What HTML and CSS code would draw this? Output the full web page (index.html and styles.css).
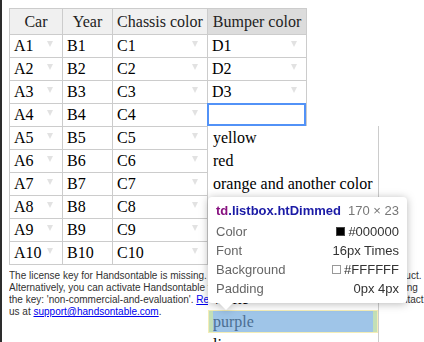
FILE: index.html
```html
<!DOCTYPE html>
<html>
<head>
<meta charset="utf-8">
<link rel="stylesheet" href="styles.css">
</head>
<body>
<div class="hot">
  <table class="grid">
    <colgroup><col class="c1"><col class="c2"><col class="c3"><col class="c4"></colgroup>
    <thead>
      <tr><th>Car</th><th>Year</th><th>Chassis color</th><th class="hl">Bumper color</th></tr>
    </thead>
    <tbody>
      <tr><td><span class="arrow"></span>A1</td><td>B1</td><td><span class="arrow"></span>C1</td><td><span class="arrow"></span>D1</td></tr>
      <tr><td><span class="arrow"></span>A2</td><td>B2</td><td><span class="arrow"></span>C2</td><td><span class="arrow"></span>D2</td></tr>
      <tr><td><span class="arrow"></span>A3</td><td>B3</td><td><span class="arrow"></span>C3</td><td><span class="arrow"></span>D3</td></tr>
      <tr><td><span class="arrow"></span>A4</td><td>B4</td><td><span class="arrow"></span>C4</td><td class="edit"></td></tr>
      <tr><td><span class="arrow"></span>A5</td><td>B5</td><td><span class="arrow"></span>C5</td><td><span class="arrow"></span>D5</td></tr>
      <tr><td><span class="arrow"></span>A6</td><td>B6</td><td><span class="arrow"></span>C6</td><td><span class="arrow"></span>D6</td></tr>
      <tr><td><span class="arrow"></span>A7</td><td>B7</td><td><span class="arrow"></span>C7</td><td><span class="arrow"></span>D7</td></tr>
      <tr><td><span class="arrow"></span>A8</td><td>B8</td><td><span class="arrow"></span>C8</td><td><span class="arrow"></span>D8</td></tr>
      <tr><td><span class="arrow"></span>A9</td><td>B9</td><td><span class="arrow"></span>C9</td><td><span class="arrow"></span>D9</td></tr>
      <tr><td><span class="arrow"></span>A10</td><td>B10</td><td><span class="arrow"></span>C10</td><td><span class="arrow"></span>D10</td></tr>
    </tbody>
  </table>
  <div class="license">The license key for Handsontable is missing. Use your purchased key to activate the product.<br>Alternatively, you can activate Handsontable to use for non-commercial purposes by passing<br>the key: 'non-commercial-and-evaluation'. <a href="#">Read more about it in the documentation</a> or contact<br>us at <a href="#">support@handsontable.com</a>.</div>

  <div class="list">
    <div class="item">yellow</div>
    <div class="item">red</div>
    <div class="item">orange and another color</div>
    <div class="item">green</div>
    <div class="item">blue</div>
    <div class="item">gray</div>
    <div class="item">black</div>
    <div class="item">white</div>
    <div class="item hl"><span class="hl-content">purple</span></div>
    <div class="item">lime</div>
  </div>

  <div class="tip">
    <div class="tip-head"><span class="title"><span class="tag">td</span><span class="cls">.listbox.htDimmed</span></span><span class="dim">170 × 23</span></div>
    <div class="tip-row"><span class="lbl">Color</span><span class="val"><i class="sw sw-black"></i>#000000</span></div>
    <div class="tip-row"><span class="lbl">Font</span><span class="val">16px Times</span></div>
    <div class="tip-row"><span class="lbl">Background</span><span class="val"><i class="sw sw-white"></i>#FFFFFF</span></div>
    <div class="tip-row"><span class="lbl">Padding</span><span class="val">0px 4px</span></div>
  </div>
</div>
</body>
</html>
```
FILE: styles.css
```css
html {
  height: 100%;
  border-left: 2px solid #2d2d2d;
  overflow: hidden;
  background: #fff;
}
body {
  margin: 8px 0 0 7px;
  font-family: "Liberation Serif", "Times New Roman", serif;
  font-size: 16px;
}
.hot {
  position: relative;
  height: 334px;
  overflow: hidden;
}
.grid {
  border-collapse: separate;
  border-spacing: 0;
  table-layout: fixed;
  width: 298px;
}
.c1 { width: 54px; }
.c2 { width: 50px; }
.c3 { width: 95px; }
.c4 { width: 99px; }
.grid th,
.grid td {
  border-right: 1px solid #ccc;
  border-bottom: 1px solid #ccc;
  white-space: nowrap;
  font-weight: normal;
  color: #000;
}
.grid th {
  background: #f0f0f0;
  border-top: 1px solid #ccc;
  line-height: 25px;
  padding: 0;
  text-align: center;
  color: #222;
}
.grid th.hl {
  background: #dcdcdc;
}
.grid td {
  padding: 0 4px;
  line-height: 22px;
  text-align: left;
}
.grid th:first-child,
.grid td:first-child {
  border-left: 1px solid #ccc;
}
.arrow {
  float: right;
  width: 16px;
  height: 22px;
  display: flex;
  justify-content: center;
  padding-top: 6px;
  box-sizing: border-box;
}
.arrow::before {
  content: "";
  width: 0;
  height: 0;
  border-left: 3.5px solid transparent;
  border-right: 3.5px solid transparent;
  border-top: 6px solid #e2e2e2;
}
.grid td.edit {
  position: relative;
}
.grid td.edit::after {
  content: "";
  position: absolute;
  left: -1px;
  top: -1px;
  right: 0;
  bottom: 0;
  border: 2px solid #5292f7;
}
.license {
  font-family: "Liberation Sans", Arial, sans-serif;
  font-size: 10px;
  line-height: 12px;
  color: #323232;
  padding: 5px 0 3px;
  white-space: nowrap;
}
.license a {
  color: #0000ee;
}
.list {
  position: absolute;
  left: 199px;
  top: 118px;
  width: 170px;
  border-right: 1px solid #ccc;
  background: #fff;
  z-index: 2;
}
.item {
  height: 23px;
  box-sizing: border-box;
  border: 1px solid transparent;
  padding: 0 4px;
  line-height: 21px;
  color: #000;
  white-space: nowrap;
}
.item.hl {
  border-color: #f4edb6;
  background: #c3dfb7;
}
.hl-content {
  display: block;
  background: #9fc5e8;
  color: #4b6e92;
}
.tip {
  position: absolute;
  left: 199px;
  top: 189px;
  width: 199px;
  height: 106px;
  box-sizing: border-box;
  padding: 5px 8px;
  background: #fff;
  border-radius: 4px;
  filter: drop-shadow(0 1px 4px rgba(0, 0, 0, 0.28));
  z-index: 3;
  font-family: "Liberation Sans", Arial, sans-serif;
  font-size: 13px;
}
.tip::after {
  content: "";
  position: absolute;
  left: 11px;
  top: 100%;
  border-left: 7.5px solid transparent;
  border-right: 7.5px solid transparent;
  border-top: 7px solid #fff;
}
.tip-head {
  display: flex;
  justify-content: space-between;
  height: 18px;
  line-height: 18px;
  margin-bottom: 2px;
}
.tag {
  color: #881280;
  font-weight: bold;
}
.cls {
  color: #1a1aa6;
  font-weight: bold;
}
.dim {
  color: #777;
}
.tip-row {
  display: flex;
  justify-content: space-between;
  align-items: center;
  height: 19px;
}
.lbl {
  color: #666;
}
.val {
  color: #333;
  display: flex;
  align-items: center;
  gap: 3px;
}
.sw {
  display: inline-block;
  width: 9px;
  height: 9px;
  box-sizing: border-box;
}
.sw-black {
  background: #000;
  border: 1px solid #444;
}
.sw-white {
  background: #fff;
  border: 1px solid #999;
}
```
